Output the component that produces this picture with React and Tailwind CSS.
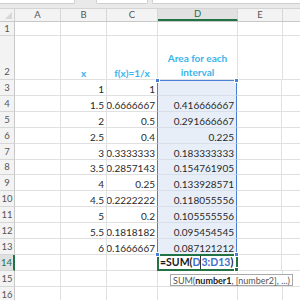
import React from "react";

const COLS = [
  { key: "A", w: "w-[46px]" },
  { key: "B", w: "w-[46px]" },
  { key: "C", w: "w-[51px]" },
  { key: "D", w: "w-[80px]" },
  { key: "E", w: "w-[45px]" },
];

const rows = [
  { n: 1, h: "h-[14px]", b: "", c: "", d: "" },
  { n: 2, h: "h-[44px]", header: true },
  { n: 3, h: "h-[16px]", b: "1", c: "1", d: "" },
  { n: 4, h: "h-[16px]", b: "1.5", c: "0.6666667", d: "0.416666667" },
  { n: 5, h: "h-[16px]", b: "2", c: "0.5", d: "0.291666667" },
  { n: 6, h: "h-[16px]", b: "2.5", c: "0.4", d: "0.225" },
  { n: 7, h: "h-[16px]", b: "3", c: "0.3333333", d: "0.183333333" },
  { n: 8, h: "h-[15px]", b: "3.5", c: "0.2857143", d: "0.154761905" },
  { n: 9, h: "h-[16px]", b: "4", c: "0.25", d: "0.133928571" },
  { n: 10, h: "h-[16px]", b: "4.5", c: "0.2222222", d: "0.118055556" },
  { n: 11, h: "h-[16px]", b: "5", c: "0.2", d: "0.105555556" },
  { n: 12, h: "h-[16px]", b: "5.5", c: "0.1818182", d: "0.095454545" },
  { n: 13, h: "h-[16px]", b: "6", c: "0.1666667", d: "0.087121212" },
  { n: 14, h: "h-[16px]", formula: true },
  { n: 15, h: "h-[16px]" },
  { n: 16, h: "h-[16px]" },
];

const grid = "border-[#e0e0e0]";

function Handle({ pos }) {
  return (
    <div
      className={`absolute w-[5px] h-[5px] bg-[#4a7fd6] border border-white z-20 ${pos}`}
    />
  );
}

function NumCell({ w, children }) {
  return (
    <div
      className={`${w} shrink-0 h-full border-r border-b ${grid} flex items-end justify-end pr-[2px] pb-[1px] overflow-hidden`}
    >
      <span className="leading-none text-[10px] text-[#2a2a2a] whitespace-nowrap">{children}</span>
    </div>
  );
}

export default function App() {
  return (
    <div
      className="w-[300px] h-[300px] overflow-hidden bg-white select-none"
      style={{ fontFamily: "Lato, 'Open Sans', sans-serif" }}
    >
      {/* top formula bar remnant */}
      <div className="h-[9px] bg-[#e9e9e9] flex gap-[4px] border-b border-[#d4d4d4]">
        <div className="w-[75px] h-[4px] bg-white border-b border-r border-[#cfcfcf] rounded-br-[2px]" />
        <div className="w-[13px]" />
        <div className="w-[52px] h-[4px] bg-white border-b border-x border-[#cfcfcf] rounded-b-[2px]" />
        <div className="flex-1 h-[4px] bg-white border-b border-l border-[#cfcfcf] rounded-bl-[2px]" />
      </div>

      {/* column headers */}
      <div className="h-[13px] flex bg-[#f3f3f3] border-b border-[#c8c8c8]">
        <div className="w-[15px] shrink-0 h-full border-r border-[#d0d0d0] flex items-end justify-end p-[2px]">
          <div className="w-0 h-0 border-l-[7px] border-l-transparent border-b-[7px] border-b-[#d6d6d6]" />
        </div>
        {COLS.map((c) => (
          <div
            key={c.key}
            className={`${c.w} shrink-0 h-full border-r border-[#d6d6d6] flex items-center justify-center text-[9.5px] leading-none ${
              c.key === "D"
                ? "bg-[#e1e1e1] text-[#217346] border-b-2 border-b-[#217346]"
                : "text-[#555]"
            }`}
          >
            {c.key}
          </div>
        ))}
        <div className="flex-1 h-full" />
      </div>

      {rows.map((r) => (
        <div key={r.n} className={`${r.h} flex`}>
          <div
            className={`w-[15px] shrink-0 h-full border-b border-r flex items-center justify-center text-[9.5px] leading-none ${
              r.formula
                ? "bg-[#e1e1e1] text-[#217346] border-r-2 border-r-[#217346] border-b-[#d6d6d6]"
                : "bg-[#f3f3f3] text-[#555] border-[#d6d6d6] border-r-[#c8c8c8]"
            }`}
          >
            {r.header ? <span className="self-end pb-[3px]">{r.n}</span> : r.n}
          </div>

          {r.header ? (
            <>
              <div className={`w-[46px] shrink-0 h-full border-r border-b ${grid}`} />
              <div className={`w-[46px] shrink-0 h-full border-r border-b ${grid} flex items-end justify-center pb-[1px]`}>
                <span className="text-[10px] font-bold text-[#3ab4ec] leading-none">x</span>
              </div>
              <div className={`w-[51px] shrink-0 h-full border-r border-b ${grid} flex items-end justify-center pb-[1px]`}>
                <span className="text-[10px] font-bold text-[#3ab4ec] leading-none whitespace-nowrap">f(x)=1/x</span>
              </div>
              <div className={`w-[80px] shrink-0 h-full border-r border-b ${grid} flex items-end justify-center pb-0`}>
                <span className="text-[10px] font-bold text-[#3ab4ec] leading-[14px] text-center">
                  Area for each
                  <br />
                  interval
                </span>
              </div>
              <div className={`w-[45px] shrink-0 h-full border-r border-b ${grid}`} />
              <div className={`flex-1 h-full border-b ${grid}`} />
            </>
          ) : r.formula ? (
            <>
              <div className={`w-[46px] shrink-0 h-full border-r border-b ${grid}`} />
              <div className={`w-[46px] shrink-0 h-full border-r border-b ${grid}`} />
              <div className={`w-[51px] shrink-0 h-full border-r border-b ${grid}`} />
              <div className="w-[81px] shrink-0 relative z-10 border-2 border-[#217346] -ml-[1px] -mt-[1px] h-[17px] flex items-center overflow-visible">
                <div className="pl-[1px] text-[10.5px] font-bold leading-none whitespace-nowrap text-[#1a1a1a] flex items-center shrink-0">
                  <span>=SUM(</span>
                  <span className="text-[#3a6fcf]">D</span>
                  <span className="inline-block w-[1px] h-[13px] bg-[#333]" />
                  <span className="text-[#3a6fcf]">3:D13</span>
                  <span>)</span>
                </div>
                <div className="absolute right-[-3px] bottom-[-3px] w-[5px] h-[5px] bg-[#217346] border border-white" />
                <div className="absolute left-[11px] top-[18px] h-[12px] px-[2px] bg-white border border-[#a9a9a9] flex items-center whitespace-nowrap text-[9px] leading-none text-[#555] z-30">
                  SUM(<span className="font-bold text-[#222]">number1</span>, [number2], ...)
                </div>
              </div>
              <div className={`w-[44px] shrink-0 h-full border-r border-b ${grid}`} />
              <div className={`flex-1 h-full border-b ${grid}`} />
            </>
          ) : (
            <>
              <div className={`w-[46px] shrink-0 h-full border-r border-b ${grid}`} />
              <NumCell w="w-[46px]">{r.b}</NumCell>
              <NumCell w="w-[51px]">{r.c}</NumCell>
              {r.n >= 3 && r.n <= 13 ? (
                <div
                  className={`w-[80px] shrink-0 h-full relative bg-[#e8eef8] border-x border-[#4a7fd6] -ml-[1px] ${
                    r.n === 3 ? "border-t" : ""
                  } ${r.n === 13 ? "border-b" : "border-b border-b-[#d8dfea]"} flex items-end justify-end pr-[2px] pb-[1px]`}
                >
                  <span className="leading-none text-[10px] text-[#2a2a2a]">{r.d}</span>
                  {r.n === 3 && (
                    <>
                      <Handle pos="-left-[3px] -top-[3px]" />
                      <Handle pos="-right-[3px] -top-[3px]" />
                    </>
                  )}
                  {r.n === 13 && (
                    <>
                      <Handle pos="-left-[3px] -bottom-[3px]" />
                      <Handle pos="-right-[3px] -bottom-[3px]" />
                    </>
                  )}
                </div>
              ) : (
                <div className={`w-[80px] shrink-0 h-full border-r border-b ${grid}`} />
              )}
              <div className={`w-[45px] shrink-0 h-full border-r border-b ${grid}`} />
              <div className={`flex-1 h-full border-b ${grid}`} />
            </>
          )}
        </div>
      ))}
    </div>
  );
}
